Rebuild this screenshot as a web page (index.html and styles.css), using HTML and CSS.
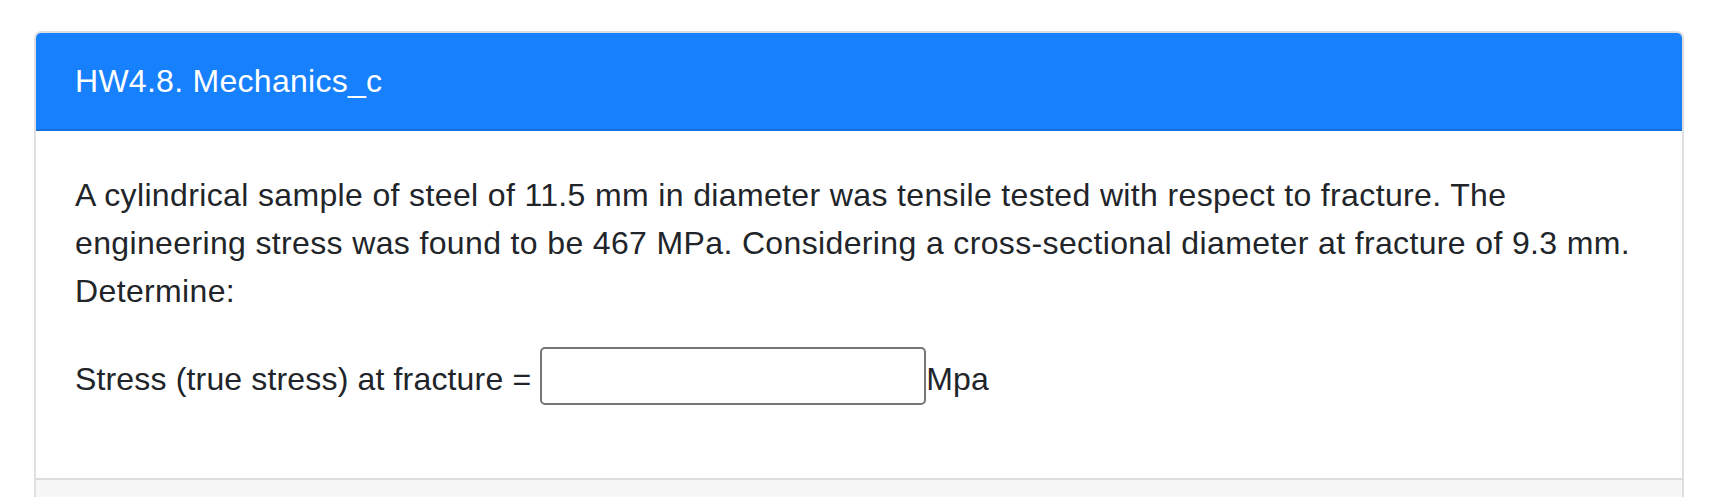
FILE: index.html
```html
<!DOCTYPE html>
<html lang="en">
<head>
<meta charset="utf-8">
<title>HW4.8. Mechanics_c</title>
<link rel="stylesheet" href="styles.css">
</head>
<body>
<div class="page">
  <div class="card">
    <div class="card-header">HW4.8. Mechanics_c</div>
    <div class="card-body">
      <p class="question">A cylindrical sample of steel of 11.5 mm in diameter was tensile tested with respect to fracture. The engineering stress was found to be 467 MPa. Considering a cross-sectional diameter at fracture of 9.3 mm. Determine:</p>
      <div class="answer-row">
        <label class="answer-label" for="ans">Stress (true stress) at fracture =</label>
        <input class="answer-input" id="ans" type="text">
        <span class="answer-unit">Mpa</span>
      </div>
    </div>
    <div class="card-footer"></div>
  </div>
</div>
</body>
</html>
```

FILE: styles.css
```css
html, body {
  margin: 0;
  padding: 0;
  background: #ffffff;
  overflow: hidden;
}

body {
  font-family: "Liberation Sans", Arial, Helvetica, sans-serif;
  font-size: 32px;
  line-height: 48px;
  color: #212529;
}

.page {
  padding: 31px 40px 0 34px;
}

.card {
  border: 2px solid #dfdfdf;
  border-bottom: 0;
  border-radius: 7px 7px 0 0;
  overflow: hidden;
  background: #ffffff;
}

.card-header {
  background: #1780fc;
  color: #ffffff;
  padding: 24px 40px 24px 39px;
  border-bottom: 2px solid #166fdb;
  letter-spacing: 0.28px;
}

.card-body {
  padding: 40px 40px 40px 39px;
  letter-spacing: 0.36px;
}

.question {
  margin: 0 0 32px 0;
}

.answer-row {
  display: flex;
  align-items: flex-end;
  margin: 0 0 33px 0;
}

.answer-label,
.answer-unit {
  margin-bottom: 2px;
  letter-spacing: 0.16px;
}

.answer-label {
  margin-right: 9px;
}

.answer-input {
  box-sizing: border-box;
  width: 386px;
  height: 58px;
  margin: 0;
  padding: 2px 6px;
  border: 2px solid #767676;
  border-radius: 5px;
  font: inherit;
  background: #ffffff;
}

.card-footer {
  background: #f7f7f7;
  border-top: 2px solid #dcdcdc;
  height: 17px;
}
```
